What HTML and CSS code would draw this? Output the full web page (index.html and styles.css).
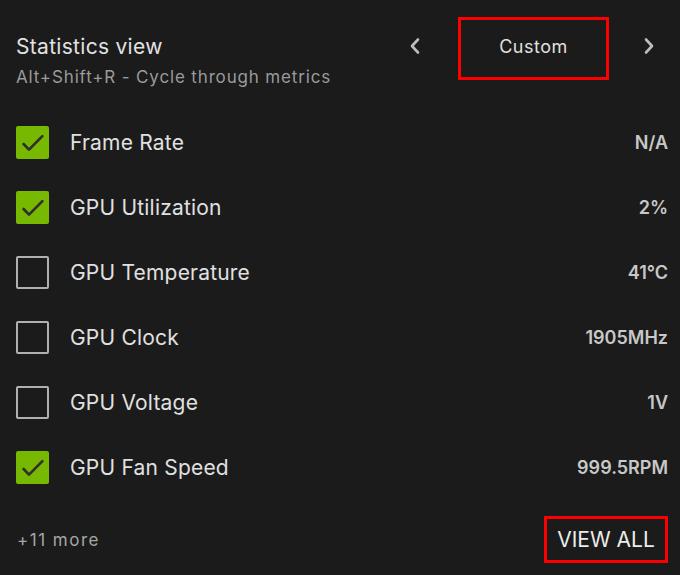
FILE: index.html
```html
<!DOCTYPE html>
<html>
<head>
<meta charset="utf-8">
<link rel="stylesheet" href="styles.css">
</head>
<body>
<div class="panel">
  <div class="header">
    <div class="titles">
      <div class="title">Statistics view</div>
      <div class="subtitle">Alt+Shift+R - Cycle through metrics</div>
    </div>
    <div class="switcher">
      <span class="chev prev"><svg width="14" height="20" viewBox="0 0 14 20"><path d="M10 3.5 L4 10 L10 16.5" fill="none" stroke="#bdbdbd" stroke-width="2.6" stroke-linecap="round" stroke-linejoin="round"/></svg></span>
      <div class="preset">Custom</div>
      <span class="chev next"><svg width="14" height="20" viewBox="0 0 14 20"><path d="M4 3.5 L10 10 L4 16.5" fill="none" stroke="#bdbdbd" stroke-width="2.6" stroke-linecap="round" stroke-linejoin="round"/></svg></span>
    </div>
  </div>
  <div class="list">
    <div class="row"><span class="box on"><svg width="33" height="33" viewBox="0 0 33 33"><path d="M7.6 18 L13 23.6 L26.4 10.2" fill="none" stroke="#2f2f2f" stroke-width="2.6" stroke-linecap="round" stroke-linejoin="round"/></svg></span><span class="label">Frame Rate</span><span class="value">N/A</span></div>
    <div class="row"><span class="box on"><svg width="33" height="33" viewBox="0 0 33 33"><path d="M7.6 18 L13 23.6 L26.4 10.2" fill="none" stroke="#2f2f2f" stroke-width="2.6" stroke-linecap="round" stroke-linejoin="round"/></svg></span><span class="label">GPU Utilization</span><span class="value">2%</span></div>
    <div class="row"><span class="box"></span><span class="label">GPU Temperature</span><span class="value">41°C</span></div>
    <div class="row"><span class="box"></span><span class="label">GPU Clock</span><span class="value">1905MHz</span></div>
    <div class="row"><span class="box"></span><span class="label">GPU Voltage</span><span class="value">1V</span></div>
    <div class="row"><span class="box on"><svg width="33" height="33" viewBox="0 0 33 33"><path d="M7.6 18 L13 23.6 L26.4 10.2" fill="none" stroke="#2f2f2f" stroke-width="2.6" stroke-linecap="round" stroke-linejoin="round"/></svg></span><span class="label">GPU Fan Speed</span><span class="value">999.5RPM</span></div>
  </div>
  <div class="footer">
    <span class="more">+11 more</span>
    <span class="viewall">VIEW ALL</span>
  </div>
</div>
</body>
</html>
```
FILE: styles.css
```css
html, body {
  margin: 0;
  padding: 0;
  background: #1b1b1b;
}
body {
  width: 680px;
  height: 575px;
  overflow: hidden;
  font-family: Inter, "Noto Sans", sans-serif;
}
.panel {
  padding: 17px 12px 0 16px;
}
.header {
  display: flex;
  align-items: flex-start;
}
.titles {
  flex: 1;
  padding-top: 18px;
}
.title {
  font-size: 21px;
  line-height: 24px;
  letter-spacing: 0.3px;
  color: #e2e2e2;
}
.subtitle {
  margin-top: 8px;
  font-size: 17px;
  line-height: 20px;
  letter-spacing: 0.85px;
  color: #9a9a9a;
}
.switcher {
  display: flex;
  align-items: center;
}
.chev {
  display: flex;
  width: 14px;
  height: 20px;
  margin-bottom: 6px;
}
.chev.prev {
  margin-right: 36px;
}
.chev.next {
  margin-left: 33px;
  margin-right: 12px;
}
.preset {
  width: 145px;
  height: 53px;
  padding-bottom: 4px;
  border: 3px solid #ff0000;
  display: flex;
  align-items: center;
  justify-content: center;
  font-size: 18px;
  letter-spacing: 0.5px;
  color: #e0e0e0;
}
.list {
  margin-top: 23px;
}
.row {
  display: flex;
  align-items: center;
  height: 65px;
}
.box {
  box-sizing: border-box;
  width: 33px;
  height: 33px;
  border: 2.5px solid #b0b0b0;
  border-radius: 2px;
  flex: none;
}
.box.on {
  border: none;
  background: #76b900;
  display: flex;
}
.label {
  margin-left: 21px;
  flex: 1;
  font-size: 21px;
  letter-spacing: 0.2px;
  color: #e0e0e0;
}
.value {
  font-size: 18px;
  font-weight: 600;
  color: #c8c8c8;
}
.footer {
  display: flex;
  align-items: center;
  justify-content: space-between;
  margin-top: 16px;
}
.more {
  font-size: 17px;
  letter-spacing: 1.5px;
  color: #a6a6a6;
  margin-left: 1px;
}
.viewall {
  width: 118px;
  height: 41px;
  border: 3px solid #ff0000;
  display: flex;
  align-items: center;
  justify-content: center;
  font-size: 21px;
  color: #ececec;
}
```
